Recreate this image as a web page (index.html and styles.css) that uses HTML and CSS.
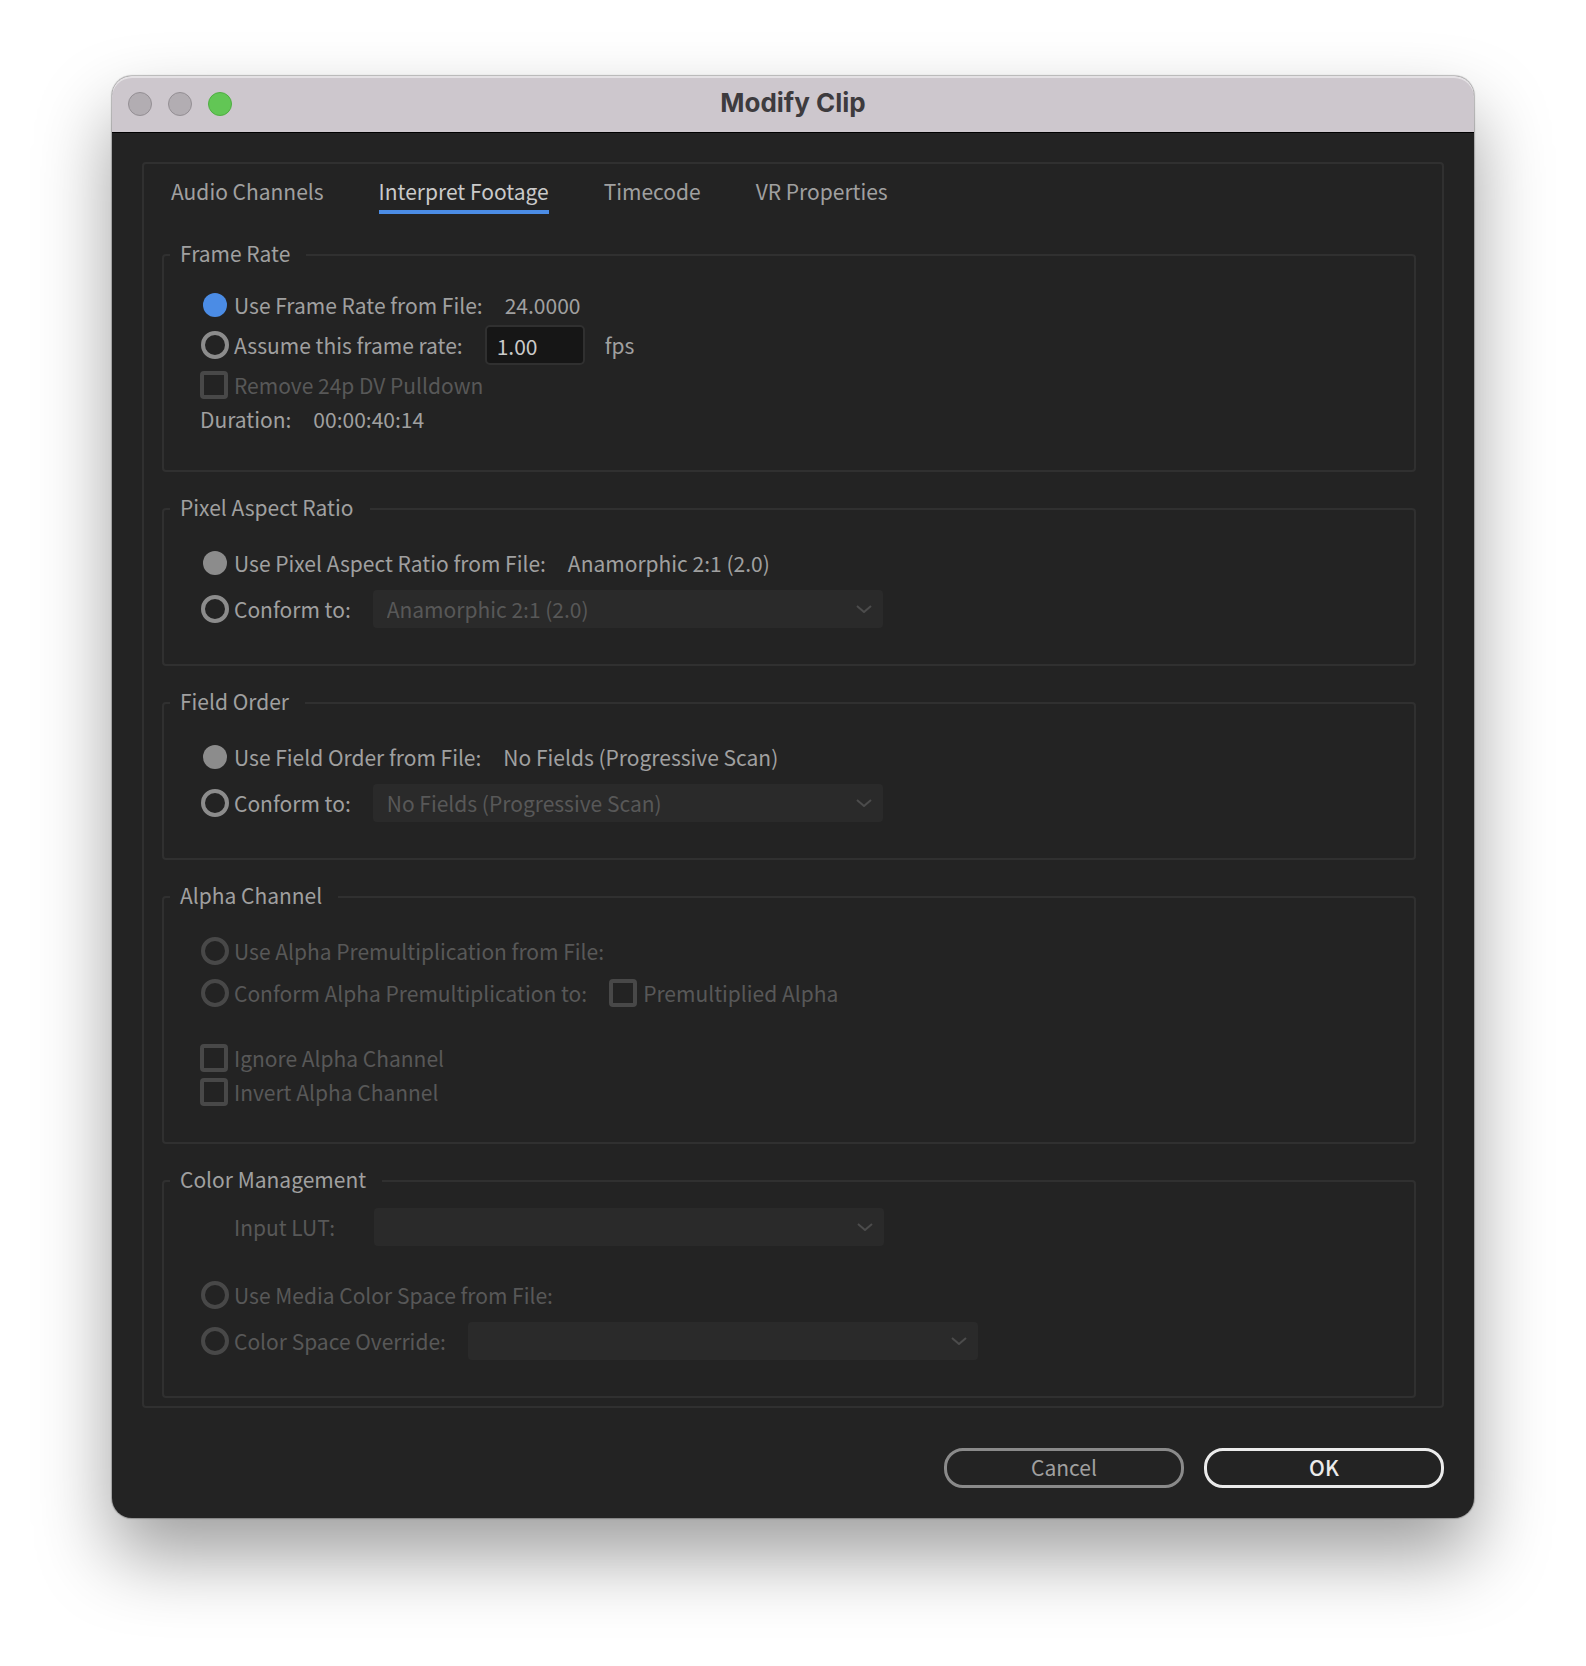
FILE: index.html
```html
<!DOCTYPE html>
<html lang="en">
<head>
<meta charset="utf-8">
<meta name="viewport" content="width=device-width, initial-scale=1">
<title>Modify Clip</title>
<link rel="stylesheet" href="styles.css">
</head>
<body>
<main class="window">
  <header class="titlebar">
    <div class="lights">
      <button class="light" type="button" aria-label="Close" disabled></button>
      <button class="light" type="button" aria-label="Minimize" disabled></button>
      <button class="light light-zoom" type="button" aria-label="Zoom"></button>
    </div>
    <h1 class="title">Modify Clip</h1>
  </header>

  <form class="content">
    <div class="panel">
      <div class="tabs" role="tablist">
        <button class="tab" type="button" role="tab" aria-selected="false">Audio Channels</button>
        <button class="tab" type="button" role="tab" aria-selected="true">Interpret Footage</button>
        <button class="tab" type="button" role="tab" aria-selected="false">Timecode</button>
        <button class="tab" type="button" role="tab" aria-selected="false">VR Properties</button>
      </div>

      <div class="groups">
        <fieldset class="group group-rate">
          <legend>Frame Rate</legend>
          <div class="row">
            <label class="option"><input class="radio accent" type="radio" name="rate" checked>Use Frame Rate from File:</label>
            <span>24.0000</span>
          </div>
          <div class="row">
            <label class="option"><input class="radio" type="radio" name="rate">Assume this frame rate:</label>
            <span class="field"><input class="number" id="fps" type="text" value="1.00"><label for="fps">fps</label></span>
          </div>
          <div class="row">
            <label class="option disabled"><input class="check" type="checkbox" disabled>Remove 24p DV Pulldown</label>
          </div>
          <div class="row row-duration">
            <span>Duration:</span>
            <span>00:00:40:14</span>
          </div>
        </fieldset>

        <fieldset class="group">
          <legend>Pixel Aspect Ratio</legend>
          <div class="row">
            <label class="option"><input class="radio" type="radio" name="par" checked>Use Pixel Aspect Ratio from File:</label>
            <span>Anamorphic 2:1 (2.0)</span>
          </div>
          <div class="row">
            <label class="option"><input class="radio" type="radio" name="par">Conform to:</label>
            <span class="dropdown">
              <select aria-label="Pixel aspect ratio" disabled><option>Anamorphic 2:1 (2.0)</option></select>
              <svg class="chevron" viewBox="0 0 16 8" aria-hidden="true"><path d="M1 1l7 6 7-6"/></svg>
            </span>
          </div>
        </fieldset>

        <fieldset class="group">
          <legend>Field Order</legend>
          <div class="row">
            <label class="option"><input class="radio" type="radio" name="order" checked>Use Field Order from File:</label>
            <span>No Fields (Progressive Scan)</span>
          </div>
          <div class="row">
            <label class="option"><input class="radio" type="radio" name="order">Conform to:</label>
            <span class="dropdown">
              <select aria-label="Field order" disabled><option>No Fields (Progressive Scan)</option></select>
              <svg class="chevron" viewBox="0 0 16 8" aria-hidden="true"><path d="M1 1l7 6 7-6"/></svg>
            </span>
          </div>
        </fieldset>

        <fieldset class="group group-alpha">
          <legend>Alpha Channel</legend>
          <div class="row">
            <label class="option disabled"><input class="radio" type="radio" name="alpha" disabled>Use Alpha Premultiplication from File:</label>
          </div>
          <div class="row row-conform">
            <label class="option disabled"><input class="radio" type="radio" name="alpha" disabled>Conform Alpha Premultiplication to:</label>
            <label class="option disabled"><input class="check" type="checkbox" disabled>Premultiplied Alpha</label>
          </div>
          <div class="row-set">
            <div class="row">
              <label class="option disabled"><input class="check" type="checkbox" disabled>Ignore Alpha Channel</label>
            </div>
            <div class="row">
              <label class="option disabled"><input class="check" type="checkbox" disabled>Invert Alpha Channel</label>
            </div>
          </div>
        </fieldset>

        <fieldset class="group group-color">
          <legend>Color Management</legend>
          <div class="row row-lut">
            <label class="disabled" for="lut">Input LUT:</label>
            <span class="dropdown">
              <select id="lut" disabled><option></option></select>
              <svg class="chevron" viewBox="0 0 16 8" aria-hidden="true"><path d="M1 1l7 6 7-6"/></svg>
            </span>
          </div>
          <div class="row-set">
            <div class="row">
              <label class="option disabled"><input class="radio" type="radio" name="space" disabled>Use Media Color Space from File:</label>
            </div>
            <div class="row">
              <label class="option disabled"><input class="radio" type="radio" name="space" disabled>Color Space Override:</label>
              <span class="dropdown">
                <select aria-label="Color space" disabled><option></option></select>
                <svg class="chevron" viewBox="0 0 16 8" aria-hidden="true"><path d="M1 1l7 6 7-6"/></svg>
              </span>
            </div>
          </div>
        </fieldset>
      </div>
    </div>

    <footer class="actions">
      <button class="action" type="button">Cancel</button>
      <button class="action primary" type="submit">OK</button>
    </footer>
  </form>
</main>
</body>
</html>
```
FILE: styles.css
```css
* {
  box-sizing: border-box;
}

body {
  margin: 0;
  padding: 76px 112px 148px;
  background: #fff;
  color: #a0a0a0;
  font: 21px/28px "Noto Sans CJK SC", "Noto Sans", sans-serif;
}

button,
input,
select {
  margin: 0;
  font: inherit;
  color: inherit;
}

.window {
  border-radius: 20px;
  background: #232323;
  box-shadow: 0 0 1px 1px rgba(0, 0, 0, 0.25), 0 38px 74px rgba(0, 0, 0, 0.38);
}

/* Title bar */

.titlebar {
  display: grid;
  grid-template-columns: 1fr auto 1fr;
  align-items: center;
  height: 56px;
  padding: 0 16px;
  border-radius: 20px 20px 0 0;
  background: #cdc7cd;
  box-shadow: inset 0 2px 0 #e4e1e4;
}

.lights {
  display: flex;
  gap: 16px;
}

.light {
  width: 24px;
  height: 24px;
  padding: 0;
  border: 1px solid #948f94;
  border-radius: 50%;
  background: #b2adb2;
}

.light-zoom {
  border-color: #4fae42;
  background: #62c655;
}

.title {
  margin: 0;
  padding-bottom: 2px;
  color: #3d3b3e;
  font: 700 26px/54px Inter, sans-serif;
}

/* Window body */

.content {
  padding: 29px 30px 30px;
  border-top: 1px solid #000;
}

.panel {
  padding: 0 26px 8px 18px;
  border: 2px solid #303030;
  border-radius: 4px;
}

.tabs {
  display: flex;
  gap: 55px;
  padding: 10px 9px 0;
}

.tab {
  padding: 0 0 2px;
  border: 0;
  border-bottom: 4px solid transparent;
  background: none;
  line-height: 34px;
}

.tab[aria-selected="true"] {
  border-color: #4b8ce5;
  color: #cacaca;
}

.groups {
  display: flex;
  flex-direction: column;
  gap: 23px;
  margin-top: 27px;
}

.group {
  min-width: 0;
  margin: 0;
  padding: 17px 6px 32px;
  border: 2px solid #303030;
  border-radius: 4px;
}

.group-rate {
  padding-top: 16px;
  padding-bottom: 37px;
}

.group-alpha {
  padding-bottom: 33px;
}

.group-color {
  padding-top: 9px;
}

legend {
  padding: 0 16px 4px 10px;
  line-height: 24px;
}

.row {
  display: flex;
  align-items: center;
  gap: 22px;
  min-height: 46px;
  padding-left: 30px;
}

.group-rate .row {
  min-height: 40px;
}

.group-rate .row-duration {
  min-height: 28px;
}

.group-alpha .row-conform {
  min-height: 38px;
}

.group-alpha .row-set {
  margin-top: 29px;
}

.group-alpha .row-set .row {
  min-height: 34px;
}

.group-color .row-set {
  margin-top: 22px;
}

.row-lut {
  gap: 39px;
  padding-left: 64px;
}

/* Controls */

.option,
.field {
  display: flex;
  align-items: center;
}

.field {
  gap: 20px;
}

.disabled {
  color: #585858;
}

.radio,
.check {
  appearance: none;
  flex: none;
  width: 28px;
  height: 28px;
  margin-right: 6px;
  border: 4px solid #8c8c8c;
}

.radio {
  margin: 0 5px 0 1px;
  border-radius: 50%;
}

.check {
  border-radius: 4px;
}

.radio:checked {
  border: 2px solid transparent;
  background: #8c8c8c padding-box;
}

.radio.accent:checked {
  background-color: #4b8ce5;
}

.radio:disabled,
.check:disabled {
  border-color: #484848;
}

.number {
  width: 100px;
  height: 40px;
  padding: 2px 10px 0;
  border: 2px solid #303030;
  border-radius: 5px;
  background: #161616;
  color: #cacaca;
}

.dropdown {
  position: relative;
  flex: 0 1 510px;
}

.dropdown select {
  display: block;
  appearance: none;
  width: 100%;
  height: 38px;
  padding: 0 40px 0 14px;
  border: 0;
  border-radius: 4px;
  background: #2a2a2a;
  color: #585858;
  line-height: 32px;
  opacity: 1;
}

.chevron {
  position: absolute;
  top: 15px;
  right: 11px;
  width: 16px;
  height: 8px;
  fill: none;
  stroke: #4c4c4c;
  stroke-width: 2;
}

/* Footer buttons */

.actions {
  display: flex;
  justify-content: flex-end;
  gap: 20px;
  margin-top: 40px;
}

.action {
  width: 240px;
  height: 40px;
  padding: 0 0 2px;
  border: 3px solid #8a8a8a;
  border-radius: 19px;
  background: none;
}

.action.primary {
  border-color: #ebebeb;
  color: #ebebeb;
  font-weight: 500;
}
```
